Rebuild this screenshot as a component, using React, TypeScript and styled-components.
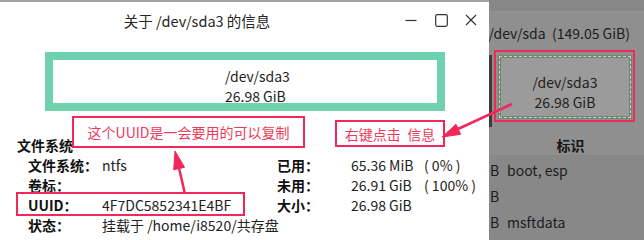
import React from "react";
import styled, { createGlobalStyle } from "styled-components";

const GlobalStyle = createGlobalStyle`
  html, body {
    margin: 0;
    padding: 0;
    background: #ffffff;
  }
`;

const RED = "#f2285a";

const Screen = styled.div`
  position: relative;
  width: 644px;
  height: 240px;
  overflow: hidden;
  display: flex;
  font-family: "Noto Sans CJK SC", "Noto Sans", sans-serif;
  font-size: 14px;
  color: #222;
`;

const Dialog = styled.div`
  width: 489px;
  flex-shrink: 0;
  background: #ffffff;
  border-top: 2px solid #a3a3a3;
  display: flex;
  flex-direction: column;
`;

const TitleBar = styled.div`
  height: 36px;
  display: flex;
  align-items: center;
`;

const Title = styled.div`
  flex: 1;
  text-align: center;
  font-size: 14.5px;
  color: #262626;
`;

const Controls = styled.div`
  width: 95px;
  padding-left: 2px;
  box-sizing: border-box;
  display: flex;
`;

const ControlButton = styled.div`
  width: 30px;
  height: 30px;
  display: flex;
  align-items: center;
  justify-content: center;
`;

const DeviceBox = styled.div`
  margin: 14px 0 0 45px;
  width: 400px;
  height: 59px;
  box-sizing: border-box;
  border: 8px solid #70d1ae;
  padding: 6px 0 0 172px;
  line-height: 20px;
  color: #1e1e1e;
`;

const SectionHeading = styled.div`
  margin: 24px 0 0 17px;
  line-height: 20px;
  font-weight: bold;
  color: #111;
`;

const InfoGrid = styled.div`
  padding-left: 28px;
  display: grid;
  grid-template-columns: 74px 175px 74px 73px auto;
  grid-auto-rows: 20px;
  line-height: 20px;
`;

const Label = styled.div`
  font-weight: bold;
  color: #111;
  white-space: nowrap;
`;

const Value = styled.div<{ $span?: boolean }>`
  color: #222;
  white-space: pre;
  ${(p) => (p.$span ? "grid-column: 2 / -1;" : "")}
`;

const BackPane = styled.div`
  flex: 1;
  min-width: 0;
  background: #8f8f8f;
  display: flex;
  flex-direction: column;
  color: #1c1c1c;
`;

const TopStrip = styled.div`
  height: 12px;
  background: #878787;
  border-bottom: 1px solid #949494;
  box-sizing: border-box;
`;

const DeviceHeader = styled.div`
  height: 38px;
  padding: 0 12px 7px 0;
  box-sizing: border-box;
  display: flex;
  align-items: flex-end;
  justify-content: flex-end;
  gap: 2px;
  line-height: 20px;
  white-space: pre;
  overflow: hidden;
`;

const PartitionRow = styled.div`
  display: flex;
  height: 72px;
`;

const EdgeBar = styled.div`
  width: 3px;
  margin: 5px 2px 0 0;
  height: 72px;
  background: #3a3a3a;
`;

const PartitionSlot = styled.div`
  width: 141px;
  box-sizing: border-box;
  border: 2px solid ${RED};
  padding: 3px 1px 1px 2px;
  display: flex;
`;

const PartitionTile = styled.div`
  flex: 1;
  box-sizing: border-box;
  background: #9b9b9b;
  border: 3px solid #6d8874;
  outline: 1px dashed #c8d2b6;
  outline-offset: -2px;
  padding-top: 14px;
  text-align: center;
  line-height: 20px;
  color: #1e1e1e;
`;

const ColumnHeader = styled.div`
  height: 33px;
  display: flex;
  align-items: flex-end;
  justify-content: center;
  padding-left: 8px;
  line-height: 20px;
  font-weight: bold;
  color: #161616;
`;

const PartitionList = styled.div`
  flex: 1;
  background: #888888;
  padding-top: 2px;
`;

const PartitionItem = styled.div`
  height: 26px;
  display: flex;
  align-items: center;
`;

const SizeTail = styled.span`
  width: 17px;
  padding-left: 1px;
`;

const AnnotationBox = styled.div<{ $x: number; $y: number; $w: number; $h: number }>`
  position: absolute;
  left: ${(p) => p.$x}px;
  top: ${(p) => p.$y}px;
  width: ${(p) => p.$w}px;
  height: ${(p) => p.$h}px;
  box-sizing: border-box;
  border: 2px solid ${RED};
  display: flex;
  align-items: center;
  justify-content: center;
  color: #ee3a5c;
  font-size: 14px;
  white-space: pre;
  pointer-events: none;
`;

const ArrowLayer = styled.svg`
  position: absolute;
  left: 0;
  top: 0;
  width: 644px;
  height: 240px;
  pointer-events: none;
`;

const Chevron = () => (
  <svg width="18" height="12" viewBox="0 0 18 12">
    <path d="M1 2 L9 10 L17 2" fill="none" stroke="#777" strokeWidth="1.2" />
  </svg>
);

const WindowControls = () => (
  <Controls>
    <ControlButton>
      <svg width="12" height="12" viewBox="0 0 12 12">
        <path d="M0.5 6.5 H11.5" stroke="#333" strokeWidth="1.2" />
      </svg>
    </ControlButton>
    <ControlButton>
      <svg width="13" height="13" viewBox="0 0 13 13">
        <rect x="0.7" y="0.7" width="11.6" height="11.6" rx="1.5" fill="none" stroke="#333" strokeWidth="1.2" />
      </svg>
    </ControlButton>
    <ControlButton>
      <svg width="12" height="12" viewBox="0 0 12 12">
        <path d="M1 1 L11 11 M11 1 L1 11" stroke="#333" strokeWidth="1.2" />
      </svg>
    </ControlButton>
  </Controls>
);

const rows = [
  { label: "文件系统：", value: "ntfs", rLabel: "已用：", rValue: "65.36 MiB", pct: "( 0% )" },
  { label: "卷标：", value: "", rLabel: "未用：", rValue: "26.91 GiB", pct: "( 100% )" },
  { label: "UUID：", value: "4F7DC5852341E4BF", rLabel: "大小：", rValue: "26.98 GiB", pct: "" },
];

const partitions = ["boot, esp", "", "msftdata"];

export default function App() {
  return (
    <>
      <GlobalStyle />
      <Screen>
        <Dialog>
          <TitleBar>
            <Title>关于 /dev/sda3 的信息</Title>
            <WindowControls />
          </TitleBar>
          <DeviceBox>
            <div>/dev/sda3</div>
            <div>26.98 GiB</div>
          </DeviceBox>
          <SectionHeading>文件系统</SectionHeading>
          <InfoGrid>
            {rows.map((r) => (
              <React.Fragment key={r.label}>
                <Label>{r.label}</Label>
                <Value>{r.value}</Value>
                <Label>{r.rLabel}</Label>
                <Value>{r.rValue}</Value>
                <Value>{r.pct}</Value>
              </React.Fragment>
            ))}
            <Label>状态：</Label>
            <Value $span>挂载于 /home/i8520/共存盘</Value>
          </InfoGrid>
        </Dialog>

        <BackPane>
          <TopStrip />
          <DeviceHeader>
            <span>/dev/sda  (149.05 GiB)</span>
            <Chevron />
          </DeviceHeader>
          <PartitionRow>
            <EdgeBar />
            <PartitionSlot>
              <PartitionTile>
                <div>/dev/sda3</div>
                <div>26.98 GiB</div>
              </PartitionTile>
            </PartitionSlot>
          </PartitionRow>
          <ColumnHeader>标识</ColumnHeader>
          <PartitionList>
            {partitions.map((flags, i) => (
              <PartitionItem key={i}>
                <SizeTail>B</SizeTail>
                <span>{flags}</span>
              </PartitionItem>
            ))}
          </PartitionList>
        </BackPane>

        <AnnotationBox $x={72} $y={116} $w={233} $h={32}>
          这个UUID是一会要用的可以复制
        </AnnotationBox>
        <AnnotationBox $x={335} $y={120} $w={110} $h={27}>
          右键点击  信息
        </AnnotationBox>
        <AnnotationBox $x={16} $y={192} $w={229} $h={24} />

        <ArrowLayer viewBox="0 0 644 240">
          <g fill={RED} stroke={RED}>
            <line x1="512" y1="104" x2="458" y2="129" strokeWidth="2.5" />
            <polygon points="442,137 460.6,134.3 456,124.3" strokeWidth="1" />
            <line x1="185" y1="194" x2="179" y2="168" strokeWidth="2.5" />
            <polygon points="175,151 184.5,167.3 173.7,169.8" strokeWidth="1" />
          </g>
        </ArrowLayer>
      </Screen>
    </>
  );
}
